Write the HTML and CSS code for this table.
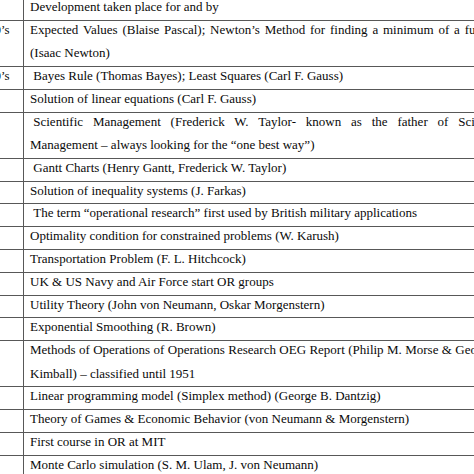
FILE: index.html
```html
<!DOCTYPE html>
<html>
<head>
<meta charset="utf-8">
<link rel="stylesheet" href="styles.css">
</head>
<body>
<table class="history">
  <colgroup><col class="c-year"><col class="c-dev"></colgroup>
  <tbody>
    <tr><td class="year"><div class="t"></div></td><td class="dev"><div class="t">Development taken place for and by</div></td></tr>
    <tr><td class="year"><div class="t">1600’s</div></td><td class="dev"><div class="t">Expected Values (Blaise Pascal); Newton’s Method for finding a minimum of a function (Isaac Newton)</div></td></tr>
    <tr><td class="year"><div class="t">1700’s</div></td><td class="dev"><div class="t ind">Bayes Rule (Thomas Bayes); Least Squares (Carl F. Gauss)</div></td></tr>
    <tr><td class="year"><div class="t"></div></td><td class="dev"><div class="t">Solution of linear equations (Carl F. Gauss)</div></td></tr>
    <tr><td class="year"><div class="t"></div></td><td class="dev"><div class="t ind">Scientific Management (Frederick W. Taylor- known as the father of Scientific Management – always looking for the “one best way”)</div></td></tr>
    <tr><td class="year"><div class="t"></div></td><td class="dev"><div class="t ind">Gantt Charts (Henry Gantt, Frederick W. Taylor)</div></td></tr>
    <tr><td class="year"><div class="t"></div></td><td class="dev"><div class="t">Solution of inequality systems (J. Farkas)</div></td></tr>
    <tr><td class="year"><div class="t"></div></td><td class="dev"><div class="t ind">The term “operational research” first used by British military applications</div></td></tr>
    <tr><td class="year"><div class="t"></div></td><td class="dev"><div class="t">Optimality condition for constrained problems (W. Karush)</div></td></tr>
    <tr><td class="year"><div class="t"></div></td><td class="dev"><div class="t">Transportation Problem (F. L. Hitchcock)</div></td></tr>
    <tr><td class="year"><div class="t"></div></td><td class="dev"><div class="t">UK &amp; US Navy and Air Force start OR groups</div></td></tr>
    <tr><td class="year"><div class="t"></div></td><td class="dev"><div class="t">Utility Theory (John von Neumann, Oskar Morgenstern)</div></td></tr>
    <tr><td class="year"><div class="t"></div></td><td class="dev"><div class="t">Exponential Smoothing (R. Brown)</div></td></tr>
    <tr><td class="year"><div class="t"></div></td><td class="dev"><div class="t">Methods of Operations of Operations Research OEG Report (Philip M. Morse &amp; George E. Kimball) – classified until 1951</div></td></tr>
    <tr><td class="year"><div class="t"></div></td><td class="dev"><div class="t">Linear programming model (Simplex method) (George B. Dantzig)</div></td></tr>
    <tr><td class="year"><div class="t"></div></td><td class="dev"><div class="t">Theory of Games &amp; Economic Behavior (von Neumann &amp; Morgenstern)</div></td></tr>
    <tr><td class="year"><div class="t"></div></td><td class="dev"><div class="t">First course in OR at MIT</div></td></tr>
    <tr><td class="year"><div class="t"></div></td><td class="dev"><div class="t">Monte Carlo simulation (S. M. Ulam, J. von Neumann)</div></td></tr>
  </tbody>
</table>
</body>
</html>
```
FILE: styles.css
```css
html, body {
  margin: 0;
  padding: 0;
  background: #ffffff;
  overflow: hidden;
}

body {
  width: 474px;
  height: 474px;
  font-family: "Liberation Serif", "Times New Roman", serif;
  font-size: 13px;
  color: #0a0a0a;
}

.history {
  border-collapse: collapse;
  table-layout: fixed;
  width: 581px;
  margin: -3px 0 0 -58px;
}

.c-year { width: 81px; }
.c-dev { width: 500px; }

.history td {
  border: 1px solid #585858;
  vertical-align: top;
  line-height: 23.4px;
  padding: 0 0 1.4px 0;
}

.history td.year {
  padding-left: 32px;
  white-space: nowrap;
}

.history td.dev {
  padding-left: 6px;
  padding-right: 15px;
  text-align: justify;
}

.t {
  margin-top: -3px;
  min-height: 23.4px;
}

.ind {
  text-indent: 0.25em;
}
```
